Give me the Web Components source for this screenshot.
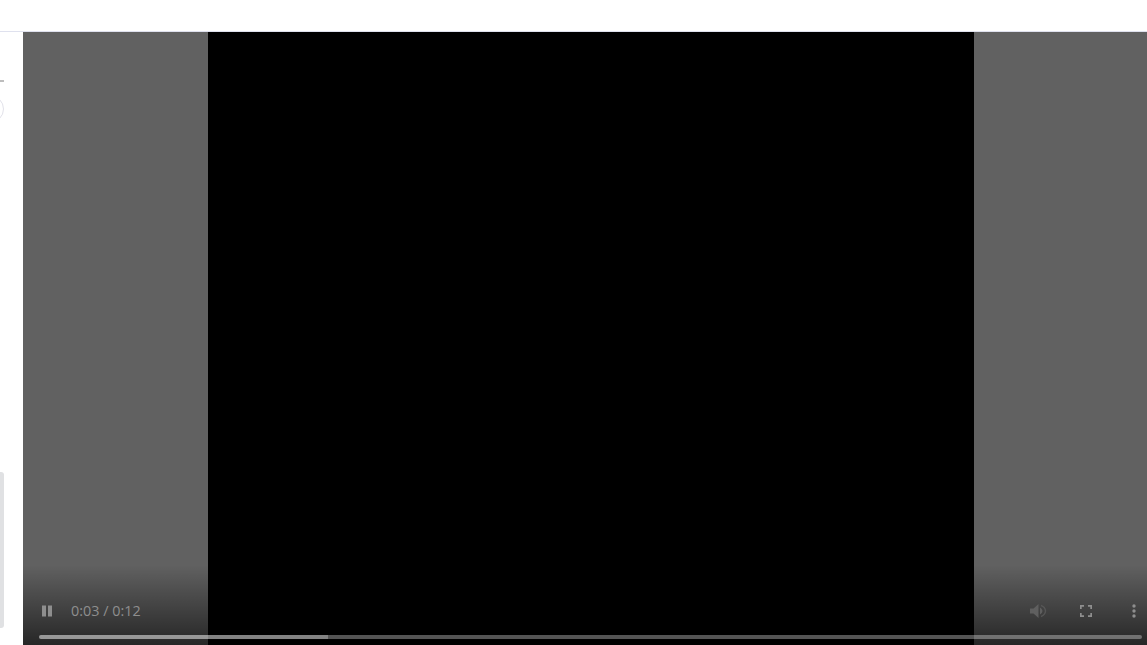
<!DOCTYPE html>
<html>
<head>
<meta charset="utf-8">
<title>Video</title>
<style>
  html, body { margin: 0; height: 100%; background: #fff; overflow: hidden; }
  body { display: flex; flex-direction: column; height: 645px; font-family: "Open Sans", "Liberation Sans", sans-serif; }
</style>
</head>
<body>
<top-bar></top-bar>
<page-main>
  <side-panel></side-panel>
  <video-player current="0:03" duration="0:12" progress="26.2"></video-player>
</page-main>

<script>
class TopBar extends HTMLElement {
  constructor() {
    super();
    this.attachShadow({ mode: "open" }).innerHTML = `
      <style>
        :host { display: block; height: 31px; background: #fff; border-bottom: 1px solid #dfe1ee; flex: none; }
      </style>`;
  }
}

class PageMain extends HTMLElement {
  constructor() {
    super();
    this.attachShadow({ mode: "open" }).innerHTML = `
      <style>
        :host { display: flex; flex: 1; min-height: 0; }
      </style>
      <slot></slot>`;
  }
}

class SidePanel extends HTMLElement {
  constructor() {
    super();
    this.attachShadow({ mode: "open" }).innerHTML = `
      <style>
        :host { display: block; width: 23px; flex: none; background: #fff; overflow: hidden; box-sizing: border-box; padding-right: 19px; }
        .rule { height: 2px; background: #bdbdbd; margin-top: 48px; }
        .ring { width: 28px; height: 28px; margin: 13px 0 0 -24px; box-sizing: border-box; border: 1px solid #e2e2ea; border-radius: 50%; }
        .card { height: 156px; margin-top: 349px; margin-left: -10px; background: #e0e1e3; border-radius: 3px; }
      </style>
      <div class="rule"></div>
      <div class="ring"></div>
      <div class="card"></div>`;
  }
}

const playerTemplate = document.createElement("template");
playerTemplate.innerHTML = `
<style>
  :host { display: block; position: relative; flex: 1; min-width: 0; background: #616161; overflow: hidden; }
  .frame { display: flex; height: 100%; }
  .side-l { width: 185px; }
  .side-r { flex: 1; }
  .picture { width: 766px; background: #000; }
  .controls {
    position: absolute; left: 0; right: 0; bottom: 0; height: 80px;
    background: linear-gradient(to bottom, rgba(0,0,0,0), rgba(0,0,0,.6));
    display: flex; flex-direction: column; justify-content: flex-end;
    padding: 0 5px 6px 16px; box-sizing: border-box;
    color: #8e8e8e;
  }
  .row { display: flex; align-items: center; height: 20px; margin-bottom: 14px; }
  .time { font: 14.4px/20px "Open Sans", "Liberation Sans", sans-serif; margin-left: 16px; }
  .spacer { flex: 1; }
  svg { display: block; flex: none; fill: currentColor; }
  .mute { color: #5f5f5f; margin-right: 32px; }
  .full { margin-right: 39px; }
  .more { margin-right: 6px; }
  .track { height: 4px; border-radius: 2px; background: rgba(255,255,255,.33); overflow: hidden; }
  .played { height: 100%; background: rgba(255,255,255,.27); }
</style>
<div class="frame">
  <div class="side-l"></div>
  <div class="picture"></div>
  <div class="side-r"></div>
</div>
<div class="controls">
  <div class="row">
    <svg width="16" height="16" viewBox="0 0 16 16"><rect x="3" y="2.500" width="4" height="11"/><rect x="9" y="2.500" width="4" height="11"/></svg>
    <span class="time"></span>
    <span class="spacer"></span>
    <svg class="mute" width="18" height="18" viewBox="0 0 18 18"><path d="M1 6.500h3.500L9.500 2v14l-5-4.500H1z"/><path d="M11 5.500c1.500.8 2.400 2 2.400 3.500s-.9 2.700-2.400 3.500z"/><path d="M12 2.800v1.500c2.200.8 3.800 2.600 3.800 4.700s-1.600 3.900-3.800 4.700v1.500c3-.9 5.200-3.300 5.200-6.200S15 3.700 12 2.800z" opacity=".7"/></svg>
    <svg class="full" width="14" height="14" viewBox="0 0 14 14"><path d="M1 1h4v1.700H2.700V5H1zM9 1h4v4h-1.700V2.700H9zM1 9h1.700v2.300H5V13H1zM11.300 9H13v4H9v-1.700h2.300z"/></svg>
    <svg class="more" width="4" height="16" viewBox="0 0 4 16"><circle cx="2" cy="3" r="1.700"/><circle cx="2" cy="8" r="1.700"/><circle cx="2" cy="13" r="1.700"/></svg>
  </div>
  <div class="track"><div class="played"></div></div>
</div>`;

class VideoPlayer extends HTMLElement {
  constructor() {
    super();
    this.attachShadow({ mode: "open" }).append(playerTemplate.content.cloneNode(true));
  }
  connectedCallback() {
    const s = this.shadowRoot;
    s.querySelector(".time").textContent = this.getAttribute("current") + " / " + this.getAttribute("duration");
    s.querySelector(".played").style.width = this.getAttribute("progress") + "%";
  }
}

customElements.define("top-bar", TopBar);
customElements.define("page-main", PageMain);
customElements.define("side-panel", SidePanel);
customElements.define("video-player", VideoPlayer);
</script>
</body>
</html>
